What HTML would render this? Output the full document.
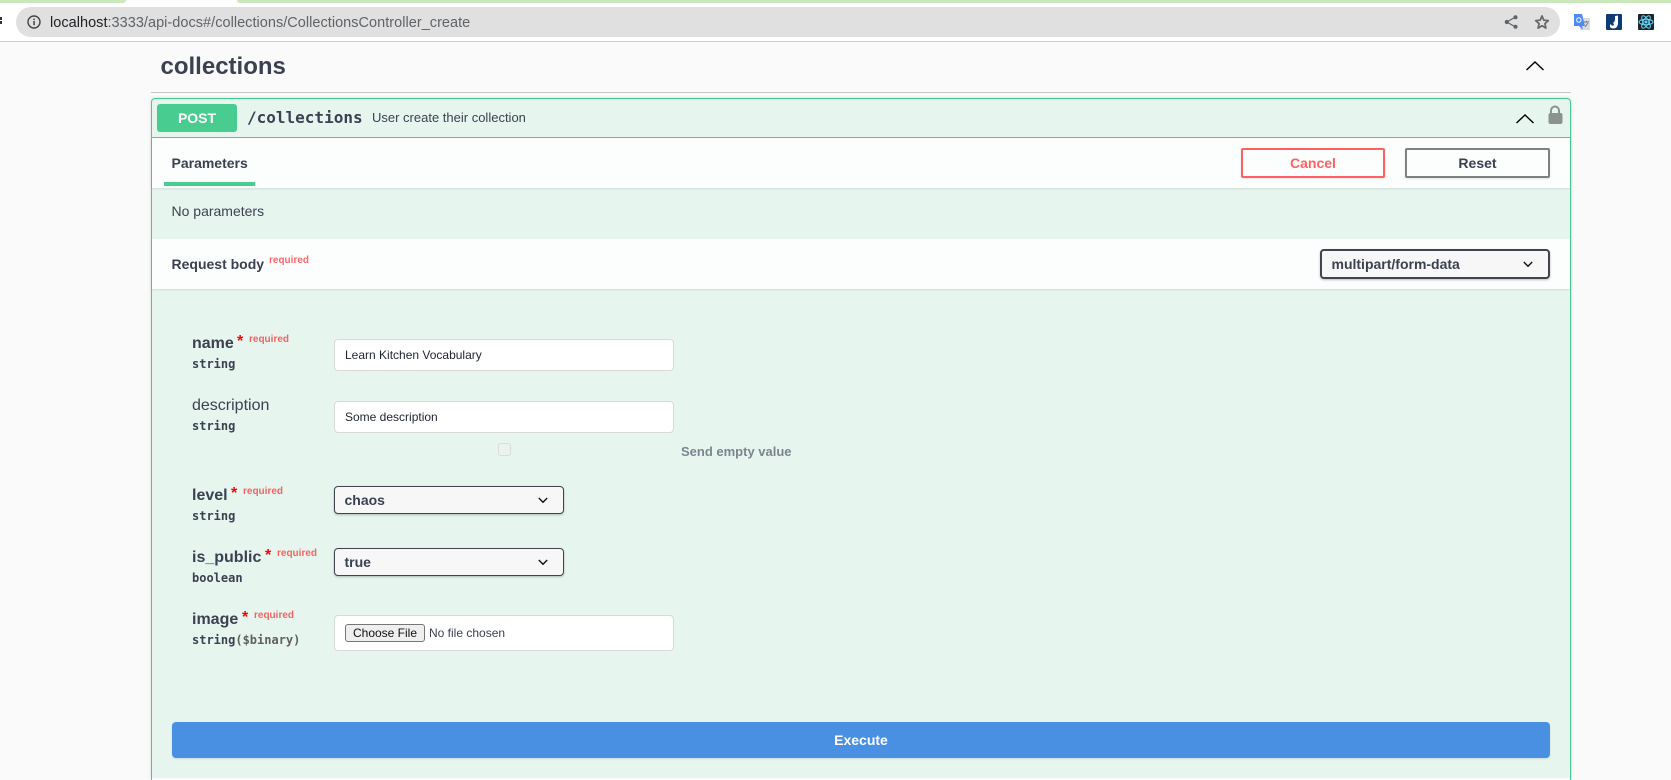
<!DOCTYPE html>
<html><head><meta charset="utf-8"><style>
html,body{margin:0;padding:0;width:1671px;height:780px;overflow:hidden;background:#fafafa;font-family:"Liberation Sans",sans-serif;color:#3b4151}
#p{position:relative;width:1671px;height:780px;overflow:hidden}
.a{position:absolute;white-space:nowrap}
.m{font-family:"DejaVu Sans Mono","Liberation Mono",monospace;font-weight:700}
.b{font-weight:700}
.req{font-size:10px;font-weight:700;color:rgba(255,0,0,.6);line-height:12px}
.star{color:#f00;font-size:16px;font-weight:700;line-height:18px}
.lab{font-size:16px;font-weight:700;line-height:20px}
.ty{font-size:12px;line-height:14px;color:#3b4151}
.inp{box-sizing:border-box;background:#fff;border:1px solid #d9d9d9;border-radius:4px;left:334px;width:340px;font-size:12px;color:#1f2430;padding-left:10px}
.sel{box-sizing:border-box;background:#f7f7f7;border:2px solid #41444e;border-radius:4px;font-size:14px;font-weight:700;box-shadow:0 1px 2px rgba(0,0,0,.25);padding-left:9.500px}
.sm{border-width:1px;padding-left:9.500px}
</style></head><body><div id="p">
<div class="a" style="left:0;top:0;width:1671px;height:41px;background:#fff;border-bottom:1px solid #d0d0d0"></div>
<div class="a" style="left:0;top:0;width:126px;height:3px;background:#cbe8bd;border-radius:0 0 6px 0"></div>
<div class="a" style="left:237px;top:0;width:1434px;height:3px;background:#cbe8bd;border-radius:0 0 0 6px"></div>
<div class="a" style="left:0;top:17px;width:2px;height:3px;background:#333"></div>
<div class="a" style="left:0;top:21px;width:2px;height:3px;background:#333"></div>
<div class="a" style="left:16px;top:7px;width:1544px;height:30px;background:#e0e0e0;border-radius:15px"></div>
<svg class="a" style="left:26px;top:14px" width="16" height="16" viewBox="0 0 16 16"><circle cx="8" cy="8" r="6" fill="none" stroke="#444" stroke-width="1.4"/><rect x="7.3" y="7" width="1.5" height="4.2" fill="#444"/><rect x="7.3" y="4.6" width="1.5" height="1.5" fill="#444"/></svg>
<div class="a" style="left:50px;top:14px;font-size:14.5px;line-height:18px;color:#5f6368;letter-spacing:.03px"><span style="color:#202124">localhost</span>:3333/api-docs#/collections/CollectionsController_create</div>
<svg class="a" style="left:1503px;top:14px" width="16" height="16" viewBox="0 0 16 16"><path d="M12.5 3 3.8 8l8.7 5" fill="none" stroke="#5f6368" stroke-width="1.2"/><circle cx="12.5" cy="3.2" r="2" fill="#5f6368"/><circle cx="3.8" cy="8" r="2.1" fill="#5f6368"/><circle cx="12.500" cy="12.800" r="2" fill="#5f6368"/></svg>
<svg class="a" style="left:1534px;top:14px" width="16" height="16" viewBox="0 0 16 16"><path d="M8 1.900 9.800 6.200l4.500.4-3.400 3 1 4.500L8 11.700l-3.900 2.400 1-4.500-3.400-3 4.500-.4z" fill="none" stroke="#666" stroke-width="1.700" stroke-linejoin="round"/></svg>
<svg class="a" style="left:1574px;top:14px" width="16" height="16" viewBox="0 0 16 16"><rect x="6" y="4" width="10" height="12" fill="#dcdcdc"/><path d="M0 0h8l3 12H8l1 4-4-4H0z" fill="#4c8bf5"/><circle cx="4.800" cy="6" r="2.200" fill="none" stroke="#e8eefc" stroke-width="1.100"/><path d="M10 8h5M12.500 7v1.500M11 13l3-4" stroke="#777" stroke-width="1" fill="none"/></svg>
<svg class="a" style="left:1606px;top:14px" width="16" height="16" viewBox="0 0 16 16"><rect width="16" height="16" rx="1" fill="#0d3b73"/><path d="M9 2 12 1.500V9c0 3.500-2 5.500-4.500 5.500-1.500 0-3-.6-3.500-1.500L4 10l2 1.500c1.200.5 2-.3 2-1.500L7 9l1.500-1.500L9 5.500z" fill="#fff"/></svg>
<svg class="a" style="left:1638px;top:14px" width="16" height="16" viewBox="0 0 16 16"><rect width="16" height="16" rx="1" fill="#20232a"/><g fill="none" stroke="#61dafb" stroke-width="1"><ellipse cx="8" cy="8" rx="7" ry="2.800"/><ellipse cx="8" cy="8" rx="7" ry="2.800" transform="rotate(60 8 8)"/><ellipse cx="8" cy="8" rx="7" ry="2.800" transform="rotate(120 8 8)"/></g><circle cx="8" cy="8" r="1.500" fill="#61dafb"/></svg>

<div class="a b" style="left:160.500px;top:53px;font-size:24px;line-height:28px">collections</div>
<svg class="a" style="left:1525px;top:59px" width="20" height="12" viewBox="0 0 20 12"><path d="M1.500 11 10 3l8.500 8" fill="none" stroke="#000" stroke-width="1.400"/></svg>
<div class="a" style="left:151px;top:92px;width:1420px;height:1px;background:#c4c6c9"></div>

<div class="a" style="left:151px;top:98px;width:1420px;height:680px;box-sizing:border-box;background:#e7f5ef;border:1px solid #49cc90;border-bottom:0;border-width:1px 1.500px 0;border-radius:4px 4px 0 0;box-shadow:0 0 3px rgba(0,0,0,.15)"></div>
<div class="a" style="left:151px;top:778px;width:1.500px;height:2px;background:#49cc90"></div>
<div class="a" style="left:1569.500px;top:778px;width:1.500px;height:2px;background:#49cc90"></div>
<div class="a" style="left:152px;top:137px;width:1418px;height:1px;background:#49cc90"></div>
<div class="a b" style="left:157px;top:104px;width:80px;height:28px;background:#49cc90;border-radius:3px;color:#fff;font-size:14px;line-height:28px;text-align:center">POST</div>
<div class="a m" style="left:247px;top:108px;font-size:16px;line-height:20px">/collections</div>
<div class="a" style="left:372px;top:110px;font-size:13px;line-height:16px">User create their collection</div>
<svg class="a" style="left:1515px;top:112px" width="20" height="12" viewBox="0 0 20 12"><path d="M1.500 11 10 3l8.500 8" fill="none" stroke="#000" stroke-width="1.400"/></svg>
<svg class="a" style="left:1548px;top:105px" width="15" height="20" viewBox="0 0 15 20"><path d="M3 9V5.500a4 4 0 0 1 8 0V9" fill="none" stroke="#8b938e" stroke-width="2"/><rect x="0.500" y="8" width="14" height="11" rx="2" fill="#8b938e"/></svg>

<div class="a" style="left:152px;top:138px;width:1418px;height:50px;background:#fcfdfd;box-shadow:0 1px 2px rgba(0,0,0,.1)"></div>
<div class="a b" style="left:171.500px;top:155px;font-size:14px;line-height:17px">Parameters</div>
<div class="a" style="left:164px;top:182px;width:91px;height:4px;background:#49cc90"></div>
<div class="a b" style="left:1241px;top:148px;width:144px;height:30px;box-sizing:border-box;border:2px solid #ff5f5f;border-radius:2px;color:#ff6060;font-size:14px;line-height:26px;text-align:center;box-shadow:0 1px 2px rgba(0,0,0,.1)">Cancel</div>
<div class="a b" style="left:1405px;top:148px;width:145px;height:30px;box-sizing:border-box;border:2px solid #808080;border-radius:2px;font-size:14px;line-height:26px;text-align:center;box-shadow:0 1px 2px rgba(0,0,0,.1)">Reset</div>

<div class="a" style="left:171.500px;top:203px;font-size:14px;line-height:17px">No parameters</div>

<div class="a" style="left:152px;top:239px;width:1418px;height:50px;background:#fcfdfd;box-shadow:0 1px 2px rgba(0,0,0,.1)"></div>
<div class="a b" style="left:171.500px;top:256px;font-size:14px;line-height:17px">Request body</div>
<div class="a req" style="left:269px;top:255px">required</div>
<div class="a sel" style="left:1320px;top:249px;width:230px;height:30px;line-height:26px">multipart/form-data</div>
<svg class="a" style="left:1523px;top:261px" width="10" height="7" viewBox="0 0 10 7"><path d="M.8 1 5 5.200 9.200 1" fill="none" stroke="#111" stroke-width="1.400"/></svg>

<div class="a lab" style="left:192px;top:334px">name</div>
<div class="a star" style="left:237px;top:333px">*</div>
<div class="a req" style="left:249px;top:334px">required</div>
<div class="a m ty" style="left:192px;top:357px">string</div>
<div class="a inp" style="top:339px;height:32px;line-height:30px">Learn Kitchen Vocabulary</div>

<div class="a" style="left:192px;top:396px;font-size:16px;line-height:20px">description</div>
<div class="a m ty" style="left:192px;top:419px">string</div>
<div class="a inp" style="top:401px;height:32px;line-height:30px">Some description</div>
<div class="a" style="left:498px;top:443px;width:13px;height:13px;box-sizing:border-box;border:1px solid #d9dcdb;border-radius:3px;background:#ecf2ef"></div>
<div class="a b" style="left:681px;top:444px;font-size:13px;line-height:15px;color:#7c8490">Send empty value</div>

<div class="a lab" style="left:192px;top:486px">level</div>
<div class="a star" style="left:231px;top:485px">*</div>
<div class="a req" style="left:243px;top:486px">required</div>
<div class="a m ty" style="left:192px;top:509px">string</div>
<div class="a sel sm" style="left:334px;top:486px;width:230px;height:28px;line-height:26px">chaos</div>
<svg class="a" style="left:538px;top:497px" width="10" height="7" viewBox="0 0 10 7"><path d="M.8 1 5 5.200 9.200 1" fill="none" stroke="#111" stroke-width="1.400"/></svg>

<div class="a lab" style="left:192px;top:548px">is_public</div>
<div class="a star" style="left:265px;top:547px">*</div>
<div class="a req" style="left:277px;top:548px">required</div>
<div class="a m ty" style="left:192px;top:571px">boolean</div>
<div class="a sel sm" style="left:334px;top:548px;width:230px;height:28px;line-height:26px">true</div>
<svg class="a" style="left:538px;top:559px" width="10" height="7" viewBox="0 0 10 7"><path d="M.8 1 5 5.200 9.200 1" fill="none" stroke="#111" stroke-width="1.400"/></svg>

<div class="a lab" style="left:192px;top:610px">image</div>
<div class="a star" style="left:242px;top:609px">*</div>
<div class="a req" style="left:254px;top:610px">required</div>
<div class="a m ty" style="left:192px;top:633px">string<span style="color:#606060">($binary)</span></div>
<div class="a inp" style="top:615px;height:36px"></div>
<div class="a" style="left:345px;top:624px;width:80px;height:18px;box-sizing:border-box;background:#efefef;border:1px solid #767676;border-radius:3px;font-size:12px;line-height:16px;text-align:center;color:#111">Choose File</div>
<div class="a" style="left:429px;top:625px;font-size:12px;line-height:16px;color:#3b4151">No file chosen</div>

<div class="a b" style="left:172px;top:722px;width:1378px;height:36px;background:#4990e2;border-radius:4px;color:#fff;font-size:14px;line-height:36px;text-align:center;box-shadow:0 1px 2px rgba(0,0,0,.1)">Execute</div>
<div class="a" style="left:152px;top:778px;width:1418px;height:2px;background:#fcfdfd"></div>
</div></body></html>
